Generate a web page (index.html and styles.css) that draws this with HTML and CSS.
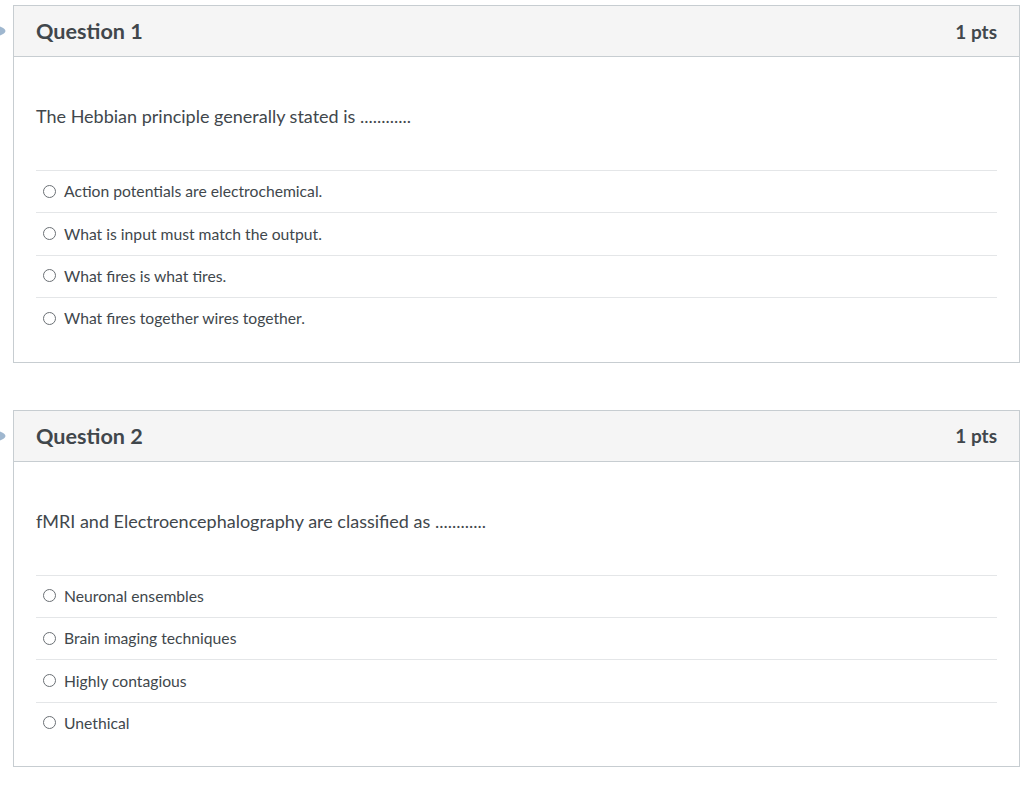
FILE: index.html
```html
<!DOCTYPE html>
<html>
<head>
<meta charset="utf-8">
<link rel="stylesheet" href="styles.css">
</head>
<body>
<div class="page">
  <div class="qrow">
    <div class="gutter">
      <svg class="marker" width="6" height="10" viewBox="0 0 6 10"><path d="M0 0.5 C3 1.5 5.5 3.5 5.5 5 C5.5 6.5 3 8.5 0 9.5 Z" fill="#9fb7cf"/></svg>
    </div>
    <div class="card">
      <div class="card-head">
        <span class="q-title">Question 1</span>
        <span class="q-pts">1 pts</span>
      </div>
      <div class="card-body">
        <div class="q-text">The Hebbian principle generally stated is ............</div>
        <div class="answers">
          <div class="answer"><span class="radio"></span><span>Action potentials are electrochemical.</span></div>
          <div class="answer"><span class="radio"></span><span>What is input must match the output.</span></div>
          <div class="answer"><span class="radio"></span><span>What fires is what tires.</span></div>
          <div class="answer"><span class="radio"></span><span>What fires together wires together.</span></div>
        </div>
      </div>
    </div>
  </div>
  <div class="qrow">
    <div class="gutter">
      <svg class="marker" width="6" height="10" viewBox="0 0 6 10"><path d="M0 0.5 C3 1.5 5.5 3.5 5.5 5 C5.5 6.5 3 8.5 0 9.5 Z" fill="#9fb7cf"/></svg>
    </div>
    <div class="card">
      <div class="card-head">
        <span class="q-title">Question 2</span>
        <span class="q-pts">1 pts</span>
      </div>
      <div class="card-body">
        <div class="q-text">fMRI and Electroencephalography are classified as ............</div>
        <div class="answers">
          <div class="answer"><span class="radio"></span><span>Neuronal ensembles</span></div>
          <div class="answer"><span class="radio"></span><span>Brain imaging techniques</span></div>
          <div class="answer"><span class="radio"></span><span>Highly contagious</span></div>
          <div class="answer"><span class="radio"></span><span>Unethical</span></div>
        </div>
      </div>
    </div>
  </div>
</div>
</body>
</html>
```
FILE: styles.css
```css
html, body {
  margin: 0;
  padding: 0;
  background: #ffffff;
}
body {
  font-family: Lato, "Liberation Sans", sans-serif;
  color: #2d3b45;
}
.page {
  padding: 5px 4px 0 0;
  display: flex;
  flex-direction: column;
  gap: 47px;
}
.qrow {
  display: flex;
}
.gutter {
  width: 13px;
  flex: none;
  padding-top: 21px;
}
.marker {
  display: block;
}
.card {
  flex: 1;
  border: 1px solid #c7cdd1;
  background: #fff;
}
.card-head {
  height: 50px;
  background: #f5f5f5;
  border-bottom: 1px solid #c7cdd1;
  display: flex;
  align-items: center;
  justify-content: space-between;
  padding: 0 22px;
}
.q-title {
  font-size: 21.6px;
  font-weight: 700;
  color: #41474c;
}
.q-pts {
  font-size: 19px;
  font-weight: 700;
  color: #41474c;
}
.card-body {
  padding: 47px 22px 22px 22px;
}
.q-text {
  font-size: 18px;
  line-height: 25px;
  color: #41474c;
  margin-bottom: 41px;
}
.answer {
  border-top: 1px solid #e4e6e8;
  height: 41.4px;
  display: flex;
  align-items: center;
  font-size: 15.7px;
  color: #41474c;
  padding-bottom: 1px;
  box-sizing: border-box;
  height: 42.4px;
}
.radio {
  width: 11px;
  height: 11px;
  border: 1px solid #6b7075;
  border-radius: 50%;
  margin-left: 7px;
  margin-right: 8px;
  flex: none;
}
```
